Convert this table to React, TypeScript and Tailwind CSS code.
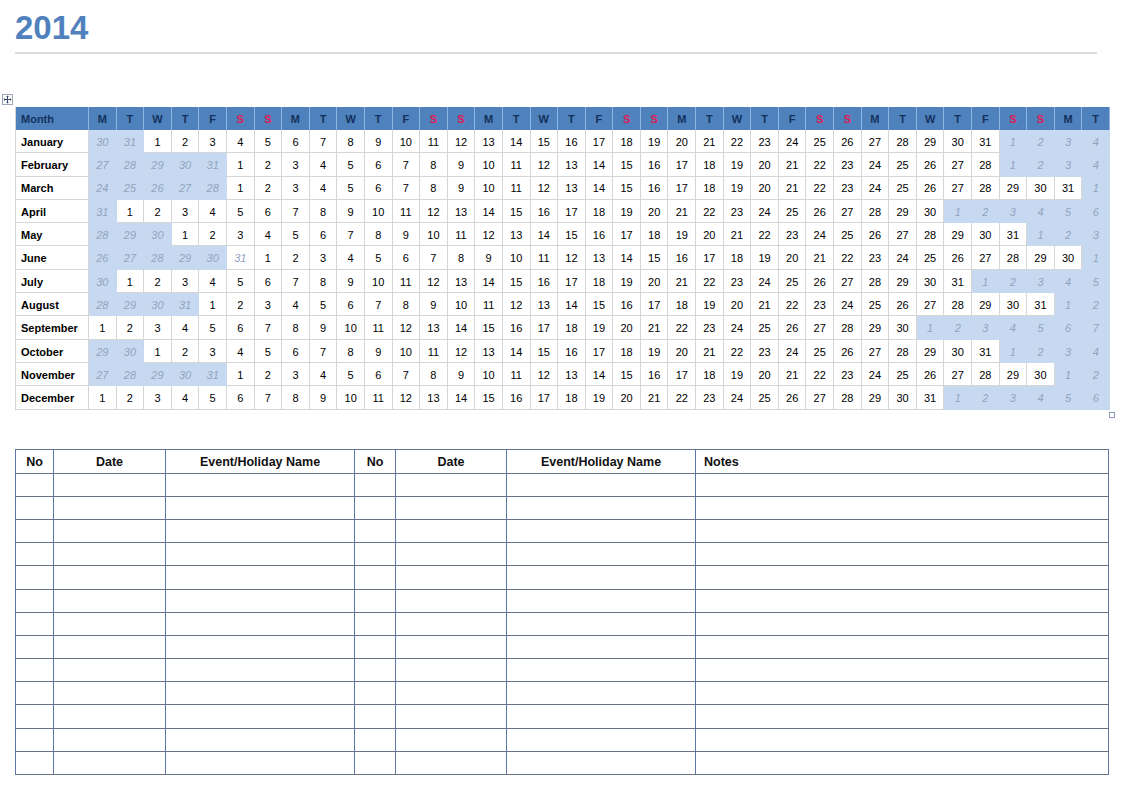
import React from 'react';

const monthNames = [
  'January', 'February', 'March', 'April', 'May', 'June',
  'July', 'August', 'September', 'October', 'November', 'December',
];

const weekLetters = ['M', 'T', 'W', 'T', 'F', 'S', 'S'];
const COLS = 37;
const headerLetters = Array.from({ length: COLS }, (_, i) => weekLetters[i % 7]);

type Cell = { day: number; kind: 'prev' | 'cur' | 'next' };

function daysIn(year: number, month: number) {
  return new Date(year, month + 1, 0).getDate();
}

function monthCells(year: number, month: number): Cell[] {
  const offset = (new Date(year, month, 1).getDay() + 6) % 7;
  const prevLen = daysIn(year, month - 1);
  const len = daysIn(year, month);
  const cells: Cell[] = [];
  for (let i = 0; i < offset; i++) cells.push({ day: prevLen - offset + 1 + i, kind: 'prev' });
  for (let d = 1; d <= len; d++) cells.push({ day: d, kind: 'cur' });
  let n = 1;
  while (cells.length < COLS) cells.push({ day: n++, kind: 'next' });
  return cells;
}

function MoveHandle() {
  return (
    <svg width="11" height="11" viewBox="0 0 11 11" className="absolute -left-[13px] -top-[13px]">
      <rect x="0.5" y="0.5" width="10" height="10" fill="#fff" stroke="#9aa6b6" />
      <path d="M5.5 2v7M2 5.5h7" stroke="#3a4a66" strokeWidth="1" />
      <path d="M5.5 1.5l-1.5 1.5h3zM5.5 9.5l-1.5-1.5h3zM1.5 5.5l1.5-1.5v3zM9.5 5.5l-1.5-1.5v3z" fill="#3a4a66" />
    </svg>
  );
}

function YearCalendar() {
  return (
    <div className="relative w-[1095px]">
      <MoveHandle />
      <table className="w-[1095px] table-fixed border-separate border-spacing-0 border-l border-[#d6d6d6] text-[11px]">
        <colgroup>
          <col className="w-[73px]" />
          {headerLetters.map((_, i) => (
            <col key={i} />
          ))}
        </colgroup>
        <thead>
          <tr className="h-[23px]">
            <th className="bg-[#4f81bd] border-r border-[#8db3e2] pl-[5px] pt-[1px] text-left font-bold text-[#13315c]">
              Month
            </th>
            {headerLetters.map((l, i) => (
              <th
                key={i}
                className={
                  'bg-[#4f81bd] border-r border-[#8db3e2] pt-[1px] text-center font-bold ' +
                  (l === 'S' ? 'text-[#e01a52]' : 'text-[#13315c]')
                }
              >
                {l}
              </th>
            ))}
          </tr>
        </thead>
        <tbody>
          {monthNames.map((name, m) => (
            <tr key={name} className="h-[23.3px]">
              <td className="border-r border-b border-[#d6d6d6] pl-[5px] pt-[2px] font-bold text-black">{name}</td>
              {monthCells(2014, m).map((c, i) => {
                const shaded = c.kind === 'next' || (c.kind === 'prev' && i < 5);
                const muted = c.kind !== 'cur';
                return (
                  <td
                    key={i}
                    className={
                      'border-r border-b pt-[2px] text-center ' +
                      (shaded ? 'bg-[#c6d9f1] border-[#c6d9f1] ' : 'bg-white border-[#d6d6d6] ') +
                      (muted ? 'italic text-[#93a3bd]' : 'text-black')
                    }
                  >
                    {c.day}
                  </td>
                );
              })}
            </tr>
          ))}
        </tbody>
      </table>
      <div className="absolute -right-[5px] -bottom-[8px] h-[6px] w-[6px] border border-[#8a9ab2] bg-white" />
    </div>
  );
}

const eventCols = [
  { label: 'No', w: 'w-[38px]', align: 'text-center' },
  { label: 'Date', w: 'w-[112px]', align: 'text-center' },
  { label: 'Event/Holiday Name', w: 'w-[189px]', align: 'text-center' },
  { label: 'No', w: 'w-[41px]', align: 'text-center' },
  { label: 'Date', w: 'w-[111px]', align: 'text-center' },
  { label: 'Event/Holiday Name', w: 'w-[189px]', align: 'text-center' },
  { label: 'Notes', w: '', align: 'text-left pl-[8px]' },
];

function EventTable() {
  return (
    <table className="w-[1094px] table-fixed border-collapse text-[12.5px]">
      <colgroup>
        {eventCols.map((c, i) => (
          <col key={i} className={c.w} />
        ))}
      </colgroup>
      <thead>
        <tr className="h-[24px]">
          {eventCols.map((c, i) => (
            <th
              key={i}
              className={
                'border-x border-x-[#5a77a6] border-y border-y-[#667186] pt-[3px] font-bold text-[#111] ' + c.align
              }
            >
              {c.label}
            </th>
          ))}
        </tr>
      </thead>
      <tbody>
        {Array.from({ length: 13 }, (_, r) => (
          <tr key={r} className="h-[23.2px]">
            {eventCols.map((_, i) => (
              <td key={i} className="border-x border-x-[#5a77a6] border-y border-y-[#667186]" />
            ))}
          </tr>
        ))}
      </tbody>
    </table>
  );
}

export default function App() {
  return (
    <div className="min-h-[792px] bg-white pl-[15px] pt-[12px] font-['Liberation_Sans',Arial,sans-serif]">
      <h1 className="text-[33px] font-bold leading-[32px] text-[#4f81bd]">2014</h1>
      <div className="mt-[8px] h-[2px] w-[1082px] bg-[#dcdcdc]" />
      <div className="mt-[53px]">
        <YearCalendar />
      </div>
      <div className="mt-[39px]">
        <EventTable />
      </div>
    </div>
  );
}
